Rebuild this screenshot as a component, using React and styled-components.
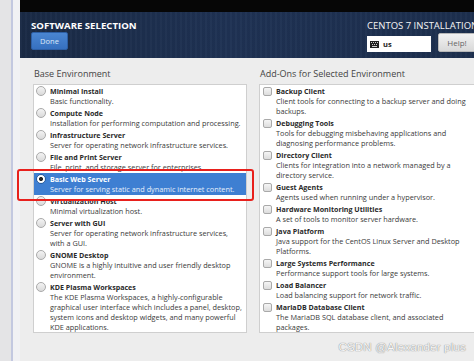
import React from "react";
import styled, { createGlobalStyle } from "styled-components";

const Global = createGlobalStyle`
  html, body { margin: 0; padding: 0; }
  body {
    width: 474px; height: 361px; overflow: hidden;
    background: #e4e4e6;
    font-family: "Open Sans", "Noto Sans", sans-serif;
  }
`;

const Page = styled.div`
  display: flex;
  width: 474px;
  height: 361px;
  overflow: hidden;
  position: relative;
`;

const Desk = styled.div`
  flex: none;
  width: 20px;
  display: flex;
  background: #e4e4e6;
`;

const DeskLine = styled.div`
  margin-left: 11px;
  width: 2px;
  background: #c3c8e0;
`;

const DeskFill = styled.div`
  flex: 1;
  background: #f1f1f4;
`;

const Window = styled.div`
  flex: none;
  width: 462px;
  display: flex;
  flex-direction: column;
  background: #ededed;
`;

const TopBar = styled.div`
  height: 12px;
  background: #060606;
`;

const Header = styled.div`
  height: 46px;
  box-sizing: border-box;
  display: flex;
  justify-content: space-between;
  padding: 8px 5px 0 11px;
  background:
    repeating-linear-gradient(90deg, rgba(255,255,255,0.018) 0 2px, rgba(0,0,0,0.03) 2px 5px),
    linear-gradient(90deg, #1a2a45 0%, #1f3254 45%, #1d2f4e 100%);
`;

const HeaderLeft = styled.div`
  display: flex;
  flex-direction: column;
  align-items: flex-start;
  gap: 1px;
`;

const Title = styled.div`
  color: #ffffff;
  font-weight: 700;
  font-size: 9.6px;
  line-height: 11px;
`;

const DoneButton = styled.div`
  width: 37px;
  height: 18px;
  display: flex;
  align-items: center;
  justify-content: center;
  border-radius: 2px;
  background: linear-gradient(#4a86d2, #3670bf);
  border: 1px solid #2d5fa5;
  box-sizing: border-box;
  color: #dce8f8;
  font-size: 7.5px;
`;

const HeaderRight = styled.div`
  width: 110px;
  display: flex;
  flex-direction: column;
  gap: 2px;
`;

const Product = styled.div`
  color: #f4f4f4;
  font-size: 9.5px;
  line-height: 11px;
  white-space: nowrap;
`;

const Controls = styled.div`
  display: flex;
  align-items: flex-start;
  gap: 7px;
`;

const Keyboard = styled.div`
  margin-top: 3px;
  width: 64px;
  height: 16px;
  box-sizing: border-box;
  background: #ffffff;
  display: flex;
  align-items: center;
  gap: 4px;
  padding-left: 3px;
  font-size: 7.5px;
  font-weight: 700;
  color: #222;
`;

const HelpButton = styled.div`
  width: 38px;
  height: 19px;
  box-sizing: border-box;
  border: 1px solid #b8b8b8;
  border-radius: 2px;
  background: linear-gradient(#f2f2f2, #d9d9d9);
  color: #666;
  font-size: 8px;
  display: flex;
  align-items: center;
  justify-content: center;
`;

const Content = styled.div`
  display: flex;
  gap: 12px;
  padding: 10px 0 0 13px;
`;

const Column = styled.div`
  flex: none;
  width: ${(p) => p.$w}px;
  display: flex;
  flex-direction: column;
`;

const SectionLabel = styled.div`
  color: #444;
  font-size: 9px;
  line-height: 12px;
  height: 16px;
  padding-left: 1px;
`;

const ListBox = styled.div`
  height: 249px;
  box-sizing: border-box;
  border: 1px solid #cfcfcf;
  background: #ffffff;
  overflow: hidden;
`;

const Item = styled.div`
  display: flex;
  gap: 4px;
  padding: 1px 0 1px ${(p) => p.$pad}px;
  background: ${(p) => (p.$selected ? "#3e7fd2" : "transparent")};
`;

const Radio = styled.div`
  flex: none;
  width: 10px;
  height: 10px;
  box-sizing: border-box;
  border-radius: 50%;
  border: 1px solid ${(p) => (p.$on ? "#2a5d9e" : "#a9a9a9")};
  background: ${(p) =>
    p.$on
      ? "radial-gradient(circle, #262626 0 1.8px, #ffffff 2.3px)"
      : "linear-gradient(#f3f3f3, #dadada)"};
`;

const Check = styled.div`
  flex: none;
  width: 9px;
  height: 9px;
  margin-top: 1px;
  box-sizing: border-box;
  border-radius: 2px;
  border: 1px solid #a9a9a9;
  background: linear-gradient(#f5f5f5, #dddddd);
`;

const Texts = styled.div`
  display: flex;
  flex-direction: column;
  white-space: nowrap;
`;

const ItemTitle = styled.div`
  font-size: 7.1px;
  line-height: 10px;
  font-weight: 700;
  color: ${(p) => (p.$selected ? "#ffffff" : "#2a2a2a")};
`;

const ItemDesc = styled.div`
  font-size: 7.3px;
  line-height: 10px;
  color: ${(p) => (p.$selected ? "#e6effb" : "#3a3a3a")};
`;

const Footer = styled.div`
  flex: 1;
  display: flex;
  justify-content: flex-end;
  align-items: center;
  padding-right: 16px;
`;

const Watermark = styled.div`
  font-family: "Liberation Sans", Arial, sans-serif;
  font-size: 11.5px;
  color: #f7f7f7;
  text-shadow: 0 0 1px #8a8a8a, 0 0 1px #9a9a9a;
  letter-spacing: 0.2px;
`;

const Callout = styled.div`
  position: absolute;
  left: 17px;
  top: 169px;
  width: 237px;
  height: 32px;
  box-sizing: border-box;
  border: 2.5px solid #e8201c;
  border-radius: 3px;
  pointer-events: none;
`;

const KbIcon = () => (
  <svg width="9" height="7" viewBox="0 0 9 7">
    <rect x="0" y="0" width="9" height="7" fill="#222" />
    <g fill="#cfcfcf">
      <rect x="1" y="1" width="1" height="1" />
      <rect x="3" y="1" width="1" height="1" />
      <rect x="5" y="1" width="1" height="1" />
      <rect x="7" y="1" width="1" height="1" />
      <rect x="2" y="3" width="1" height="1" />
      <rect x="4" y="3" width="1" height="1" />
      <rect x="6" y="3" width="1" height="1" />
      <rect x="2" y="5" width="5" height="1" />
    </g>
  </svg>
);

const base = [
  { t: "Minimal Install", d: ["Basic functionality."] },
  { t: "Compute Node", d: ["Installation for performing computation and processing."] },
  { t: "Infrastructure Server", d: ["Server for operating network infrastructure services."] },
  { t: "File and Print Server", d: ["File, print, and storage server for enterprises."] },
  { t: "Basic Web Server", d: ["Server for serving static and dynamic internet content."], sel: true },
  { t: "Virtualization Host", d: ["Minimal virtualization host."] },
  { t: "Server with GUI", d: ["Server for operating network infrastructure services,", "with a GUI."] },
  { t: "GNOME Desktop", d: ["GNOME is a highly intuitive and user friendly desktop", "environment."] },
  {
    t: "KDE Plasma Workspaces",
    d: [
      "The KDE Plasma Workspaces, a highly-configurable",
      "graphical user interface which includes a panel, desktop,",
      "system icons and desktop widgets, and many powerful",
      "KDE applications.",
    ],
  },
];

const addons = [
  { t: "Backup Client", d: ["Client tools for connecting to a backup server and doing", "backups."] },
  { t: "Debugging Tools", d: ["Tools for debugging misbehaving applications and", "diagnosing performance problems."] },
  { t: "Directory Client", d: ["Clients for integration into a network managed by a", "directory service."] },
  { t: "Guest Agents", d: ["Agents used when running under a hypervisor."] },
  { t: "Hardware Monitoring Utilities", d: ["A set of tools to monitor server hardware."] },
  { t: "Java Platform", d: ["Java support for the CentOS Linux Server and Desktop", "Platforms."] },
  { t: "Large Systems Performance", d: ["Performance support tools for large systems."] },
  { t: "Load Balancer", d: ["Load balancing support for network traffic."] },
  { t: "MariaDB Database Client", d: ["The MariaDB SQL database client, and associated", "packages."] },
];

export default function App() {
  return (
    <>
      <Global />
      <Page>
        <Desk>
          <DeskLine />
          <DeskFill />
        </Desk>
        <Window>
          <TopBar />
          <Header>
            <HeaderLeft>
              <Title>SOFTWARE SELECTION</Title>
              <DoneButton>Done</DoneButton>
            </HeaderLeft>
            <HeaderRight>
              <Product>CENTOS 7 INSTALLATION</Product>
              <Controls>
                <Keyboard>
                  <KbIcon />
                  us
                </Keyboard>
                <HelpButton>Help!</HelpButton>
              </Controls>
            </HeaderRight>
          </Header>
          <Content>
            <Column $w={214}>
              <SectionLabel>Base Environment</SectionLabel>
              <ListBox>
                {base.map((it) => (
                  <Item key={it.t} $pad={2} $selected={it.sel}>
                    <Radio $on={it.sel} />
                    <Texts>
                      <ItemTitle $selected={it.sel}>{it.t}</ItemTitle>
                      {it.d.map((l) => (
                        <ItemDesc key={l} $selected={it.sel}>{l}</ItemDesc>
                      ))}
                    </Texts>
                  </Item>
                ))}
              </ListBox>
            </Column>
            <Column $w={222}>
              <SectionLabel>Add-Ons for Selected Environment</SectionLabel>
              <ListBox>
                {addons.map((it) => (
                  <Item key={it.t} $pad={3}>
                    <Check />
                    <Texts>
                      <ItemTitle>{it.t}</ItemTitle>
                      {it.d.map((l) => (
                        <ItemDesc key={l}>{l}</ItemDesc>
                      ))}
                    </Texts>
                  </Item>
                ))}
              </ListBox>
            </Column>
          </Content>
          <Footer>
            <Watermark>CSDN @Alexander plus</Watermark>
          </Footer>
        </Window>
        <Callout />
      </Page>
    </>
  );
}
